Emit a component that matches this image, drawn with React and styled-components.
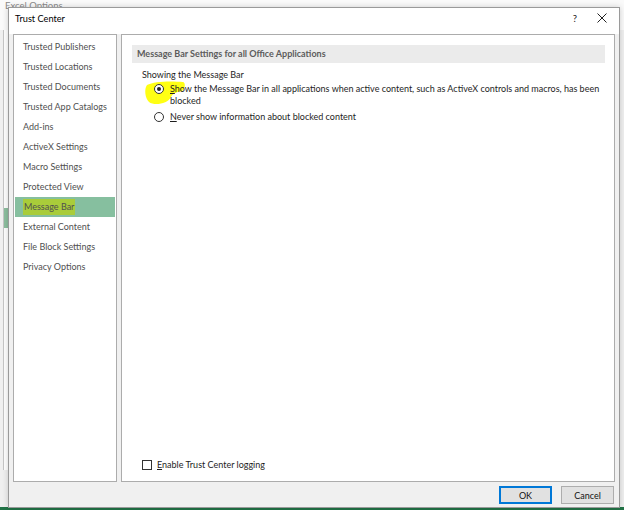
import React from 'react';
import styled, { createGlobalStyle } from 'styled-components';

const Global = createGlobalStyle`
  html, body { margin: 0; padding: 0; background: #f0f0f0; }
  body { font-family: Lato, "Noto Sans", sans-serif; }
  #root { width: 624px; height: 510px; }
`;

const Desktop = styled.div`
  position: relative;
  width: 624px;
  height: 510px;
  overflow: hidden;
  background: #ececec;
  font-family: Lato, "Noto Sans", sans-serif;
`;

const BackWindow = styled.div`
  position: absolute;
  inset: 0;
  display: flex;
  flex-direction: column;
  background: #f0f0f0;
`;

const BackTitle = styled.div`
  flex: none;
  height: 30px;
  box-sizing: border-box;
  background: #fafafa;
  padding: 1px 0 0 5px;
  font-size: 9.5px;
  color: #8a8a8a;
  line-height: 10px;
`;

const BackBody = styled.div`
  flex: 1;
  min-height: 0;
  display: flex;
  align-items: flex-start;
  padding: 0 0 0 3px;
`;

const BackRail = styled.div`
  width: 5px;
  height: 440px;
  box-sizing: border-box;
  background: #fff;
  border-left: 1px solid #c6c6c6;
  display: flex;
  flex-direction: column;
  padding-top: 178px;
`;

const BackRailItem = styled.div`
  height: 20px;
  background: #8dbf9f;
`;

const StatusBar = styled.div`
  position: absolute;
  left: 0;
  right: 0;
  bottom: 0;
  height: 3px;
  background: #217346;
`;

const Dialog = styled.div`
  position: absolute;
  left: 8px;
  top: 7px;
  width: 612px;
  height: 501px;
  box-sizing: border-box;
  border: 1px solid #9a9a9a;
  background: #f0f0f0;
  display: flex;
  flex-direction: column;
  box-shadow: 0 0 6px rgba(0, 0, 0, 0.18);
`;

const TitleBar = styled.div`
  flex: none;
  height: 26px;
  background: #fff;
  display: flex;
  align-items: flex-start;
  padding: 5px 0 0 6px;
  box-sizing: border-box;
  font-size: 9.2px;
  color: #000;
  line-height: 12px;
`;

const TitleText = styled.div`
  flex: 1;
`;

const TitleButton = styled.div`
  width: ${p => p.$w}px;
  display: flex;
  justify-content: center;
  font-size: 9.5px;
  color: #222;
  line-height: 12px;
`;

const Panels = styled.div`
  flex: none;
  display: flex;
  gap: 4px;
  padding: 0 4px;
  height: 448px;
  box-sizing: border-box;
`;

const NavPanel = styled.div`
  flex: none;
  width: 104px;
  box-sizing: border-box;
  background: #fff;
  border: 1px solid #acacac;
  padding-top: 2px;
  display: flex;
  flex-direction: column;
`;

const NavItem = styled.div`
  height: 20px;
  line-height: 20px;
  padding-left: ${p => (p.$selected ? 8 : 9)}px;
  margin: 0 ${p => (p.$selected ? 1 : 0)}px;
  font-size: 9px;
  color: #505050;
  background: ${p => (p.$selected ? '#86bf9f' : 'transparent')};
  white-space: nowrap;
`;

const Marker = styled.span`
  background: #a9cc3a;
  padding: 2px 1px 3px 1px;
`;

const ContentPanel = styled.div`
  position: relative;
  flex: 1;
  min-width: 0;
  box-sizing: border-box;
  background: #fff;
  border: 1px solid #acacac;
  padding: 10px 9px 10px 10px;
  display: flex;
  flex-direction: column;
`;

const Highlight = styled.svg`
  position: absolute;
  left: 22px;
  top: 45px;
  width: 42px;
  height: 26px;
`;

const SectionHeader = styled.div`
  position: relative;
  height: 18px;
  line-height: 18px;
  background: #ebebeb;
  padding-left: 5px;
  font-size: 9px;
  font-weight: 700;
  color: #5c5c5c;
`;

const Group = styled.div`
  position: relative;
  padding-left: 10px;
  margin-top: 6px;
  font-size: 9px;
  color: #1e1e1e;
  line-height: 12px;
`;

const OptionRow = styled.div`
  display: flex;
  align-items: flex-start;
  margin-top: ${p => p.$mt}px;
  padding-left: 12px;
`;

const Radio = styled.span`
  flex: none;
  width: 10px;
  height: 10px;
  margin-top: 1px;
  box-sizing: border-box;
  border: 1px solid #333;
  border-radius: 50%;
  background: #fff;
  display: flex;
  align-items: center;
  justify-content: center;
  &::after {
    content: '';
    width: 4px;
    height: 4px;
    border-radius: 50%;
    background: ${p => (p.$checked ? '#222' : 'transparent')};
  }
`;

const OptionText = styled.div`
  margin-left: 6px;
  white-space: nowrap;
`;

const CheckRow = styled.div`
  margin-top: auto;
  display: flex;
  align-items: center;
  padding-left: 10px;
  font-size: 9px;
  color: #1e1e1e;
  line-height: 12px;
`;

const CheckBox = styled.span`
  width: 10px;
  height: 10px;
  box-sizing: border-box;
  border: 1px solid #333;
  background: #fff;
  margin-right: 5px;
`;

const Footer = styled.div`
  flex: 1;
  display: flex;
  justify-content: flex-end;
  align-items: flex-start;
  gap: 9px;
  padding: 4px 5px 0 0;
`;

const Button = styled.div`
  width: 53px;
  height: 18px;
  box-sizing: border-box;
  background: #e1e1e1;
  border: ${p => (p.$default ? '2px solid #0078d7' : '1px solid #adadad')};
  display: flex;
  align-items: center;
  justify-content: center;
  font-size: 9px;
  color: #111;
`;

const navItems = [
  'Trusted Publishers',
  'Trusted Locations',
  'Trusted Documents',
  'Trusted App Catalogs',
  'Add-ins',
  'ActiveX Settings',
  'Macro Settings',
  'Protected View',
  'Message Bar',
  'External Content',
  'File Block Settings',
  'Privacy Options',
];

export default function App() {
  return (
    <>
      <Global />
      <Desktop>
        <BackWindow>
          <BackTitle>Excel Options</BackTitle>
          <BackBody>
            <BackRail>
              <BackRailItem />
            </BackRail>
          </BackBody>
          <StatusBar />
        </BackWindow>
        <Dialog>
          <TitleBar>
            <TitleText>Trust Center</TitleText>
            <TitleButton $w={20}>?</TitleButton>
            <TitleButton $w={34}>
              <svg width="10" height="10" viewBox="0 0 10 10">
                <path d="M0.5 0.5 L9.5 9.5 M9.5 0.5 L0.5 9.5" stroke="#222" strokeWidth="1" />
              </svg>
            </TitleButton>
          </TitleBar>
          <Panels>
            <NavPanel>
              {navItems.map(item => (
                <NavItem key={item} $selected={item === 'Message Bar'}>
                  {item === 'Message Bar' ? <Marker>{item}</Marker> : item}
                </NavItem>
              ))}
            </NavPanel>
            <ContentPanel>
              <Highlight viewBox="0 0 42 26">
                <path
                  d="M3 5 C 10 1, 28 1, 39 2 C 42 3, 41 9, 38 11 C 33 12, 29 13, 27 17 C 24 24, 10 26, 5 22 C 1 18, 0 9, 3 5 Z"
                  fill="#ffff14"
                />
              </Highlight>
              <SectionHeader>Message Bar Settings for all Office Applications</SectionHeader>
              <Group>
                Showing the Message Bar
                <OptionRow $mt={2}>
                  <Radio $checked />
                  <OptionText>
                    <u>S</u>how the Message Bar in all applications when active content, such as ActiveX controls and macros, has been
                    <br />
                    blocked
                  </OptionText>
                </OptionRow>
                <OptionRow $mt={4}>
                  <Radio />
                  <OptionText>
                    <u>N</u>ever show information about blocked content
                  </OptionText>
                </OptionRow>
              </Group>
              <CheckRow>
                <CheckBox />
                <span>
                  <u>E</u>nable Trust Center logging
                </span>
              </CheckRow>
            </ContentPanel>
          </Panels>
          <Footer>
            <Button $default>OK</Button>
            <Button>Cancel</Button>
          </Footer>
        </Dialog>
      </Desktop>
    </>
  );
}
